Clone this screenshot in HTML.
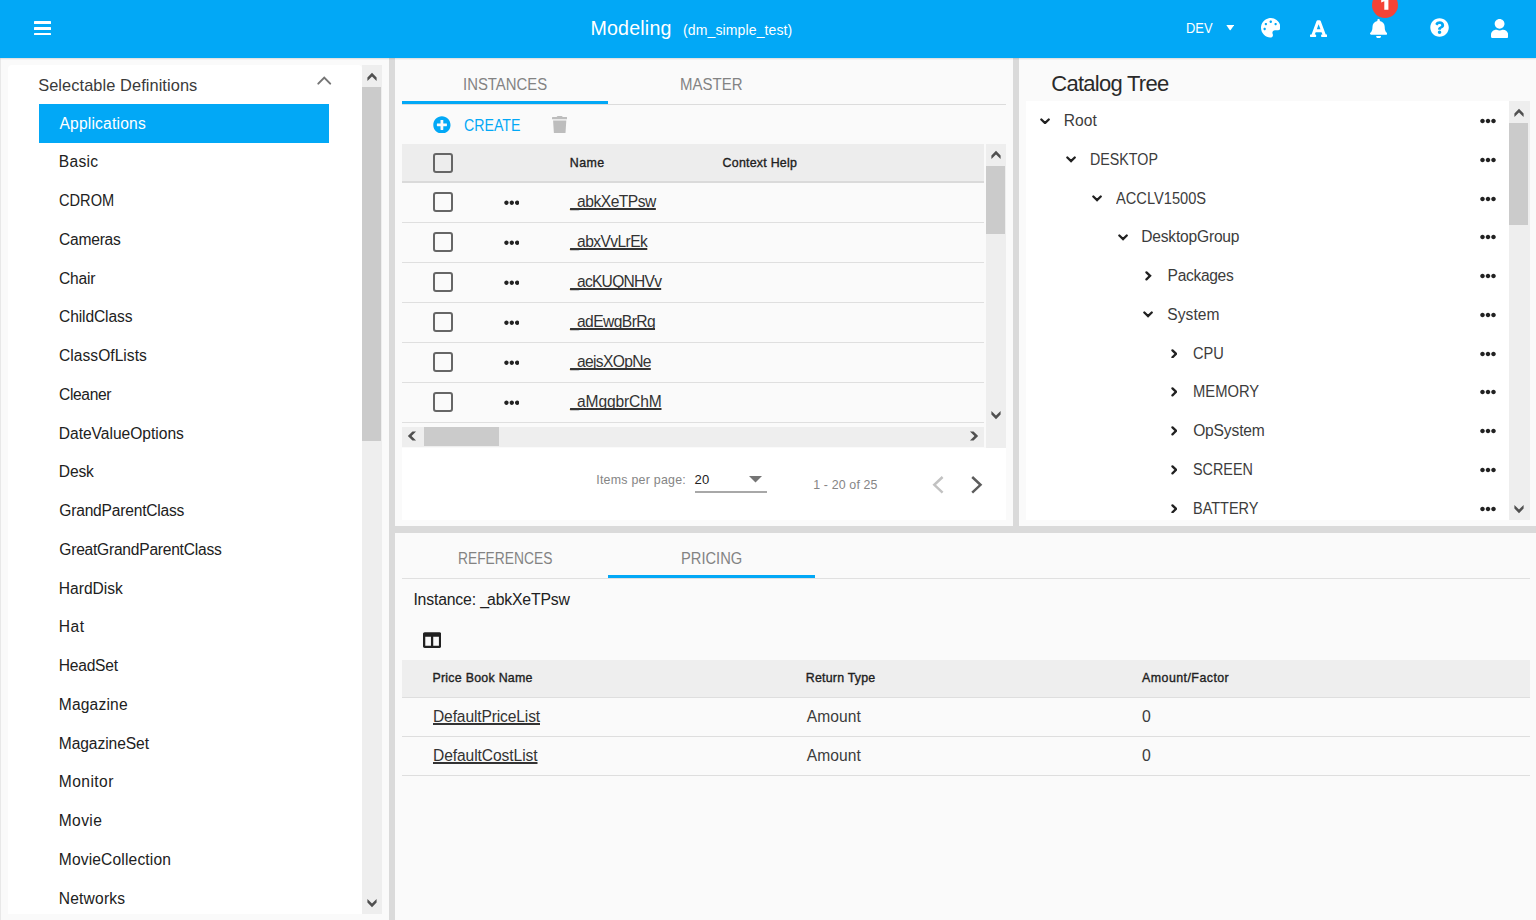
<!DOCTYPE html>
<html><head><meta charset="utf-8"><title>Modeling</title>
<style>
html,body{margin:0;padding:0}
body{width:1536px;height:920px;overflow:hidden;position:relative;background:#fafafa;font-family:"Liberation Sans",sans-serif;}
body div,body span,body a,body svg{position:absolute;white-space:nowrap;display:block}
a{text-decoration:underline;text-decoration-thickness:1.6px;text-decoration-skip-ink:none}
u{text-decoration:inherit;letter-spacing:-1.9px}
</style></head><body>
<div style="left:0px;top:57px;width:1px;height:863px;background:#e8e8e8;"></div>
<div style="left:8px;top:65.25px;width:354px;height:848.45px;background:#fff;border-radius:4px 4px 0 0;"></div>
<div style="left:362.1px;top:65.25px;width:19.9px;height:848.45px;background:#eeeeee;"></div>
<div style="left:362.1px;top:87px;width:18.8px;height:354px;background:#cbcbcb;"></div>
<div style="left:389px;top:57px;width:6px;height:863px;background:#dadada;"></div>
<div style="left:1013px;top:57px;width:6px;height:470px;background:#dadada;"></div>
<div style="left:395px;top:526.1px;width:1141px;height:6.7px;background:#dadada;"></div>
<div style="left:0px;top:0px;width:1536px;height:57.5px;background:#02a8f6;box-shadow:0 1px 1.5px rgba(0,0,0,.13);"></div>
<div style="left:34px;top:20.7px;width:17px;height:3px;background:#fff;border-radius:.6px;"></div>
<div style="left:34px;top:26.7px;width:17px;height:3px;background:#fff;border-radius:.6px;"></div>
<div style="left:34px;top:32.6px;width:17px;height:2.8px;background:#fff;border-radius:.6px;"></div>
<span style="left:590.44px;top:19.11px;font-size:19.6px;line-height:19.6px;color:#fff;letter-spacing:0.204px;">Modeling</span>
<span style="left:683.09px;top:22.85px;font-size:14px;line-height:14px;color:#fff;letter-spacing:0.120px;">(dm_simple_test)</span>
<span style="left:1185.70px;top:21.43px;font-size:14.5px;line-height:14.5px;color:#fff;transform:scaleX(0.8920);transform-origin:0 0;">DEV</span>
<svg style="left:1225.5px;top:25px" width="8.4" height="5.6" viewBox="0 0 8.4 5.6"><path d="M0.3 0h7.8L4.7 5.1Q4.2 5.6 3.7 5.1z" fill="#fff"/></svg>
<svg style="left:1260.6px;top:18.1px;" width="19.5" height="19.6" viewBox="0 0 512 512" preserveAspectRatio="none"><path fill="#fff" d="M204.3 5C104.9 24.4 24.8 104.3 5.2 203.4c-37 187 131.700 326.4 258.8 306.7 41.2-6.4 61.4-54.6 42.5-91.7-23.1-45.4 9.9-98.4 60.9-98.4h79.7c35.8 0 64.8-29.6 64.9-65.3C511.500 97.100 368.100-26.900 204.300 5zM96 320c-17.700 0-32-14.300-32-32s14.300-32 32-32 32 14.300 32 32-14.300 32-32 32zm32-128c-17.700 0-32-14.300-32-32s14.300-32 32-32 32 14.300 32 32-14.300 32-32 32zm128-64c-17.700 0-32-14.300-32-32s14.300-32 32-32 32 14.300 32 32-14.300 32-32 32zm128 64c-17.700 0-32-14.300-32-32s14.300-32 32-32 32 14.300 32 32-14.300 32-32 32z"/></svg>
<svg style="left:1310px;top:18.55px;" width="17.25" height="19.14" viewBox="0 0 448 512" preserveAspectRatio="none"><path fill="#fff" d="M432 416h-23.410L277.880 53.690A32 32 0 0 0 247.580 32h-47.160a32 32 0 0 0-30.300 21.690L39.410 416H16a16 16 0 0 0-16 16v32a16 16 0 0 0 16 16h128a16 16 0 0 0 16-16v-32a16 16 0 0 0-16-16h-19.580l23.300-64h152.560l23.300 64H304a16 16 0 0 0-16 16v32a16 16 0 0 0 16 16h128a16 16 0 0 0 16-16v-32a16 16 0 0 0-16-16zM176.850 272L224 142.510 271.150 272z"/></svg>
<svg style="left:1370.3px;top:18.6px;" width="17.2" height="19.4" viewBox="0 0 448 512" preserveAspectRatio="none"><path fill="#fff" d="M224 512c35.32 0 63.97-28.65 63.97-64H160.03c0 35.35 28.65 64 63.97 64zm215.39-149.71c-19.32-20.76-55.47-51.99-55.47-154.29 0-77.7-54.48-139.9-127.94-155.16V32c0-17.67-14.32-32-31.98-32s-31.98 14.33-31.98 32v20.84C118.56 68.1 64.08 130.3 64.08 208c0 102.3-36.15 133.53-55.47 154.29-6 6.45-8.66 14.16-8.61 21.71.11 16.4 12.98 32 32.1 32h383.8c19.12 0 32-15.6 32.1-32 .05-7.55-2.61-15.27-8.61-21.71z"/></svg>
<div style="left:1372px;top:-8px;width:26px;height:26px;background:#f44336;border-radius:50%;"></div>
<svg style="left:1378px;top:0px" width="14" height="12" viewBox="0 0 14 12"><path d="M10.4 -3V9.8H6.3V1.3L3.2 2.4V-1.2L7 -3z" fill="#fff"/></svg>
<svg style="left:1429.95px;top:18.45px;" width="19.1" height="19.1" viewBox="0 0 512 512" preserveAspectRatio="none"><path fill="#fff" d="M504 256c0 136.997-111.043 248-248 248S8 392.997 8 256C8 119.083 119.043 8 256 8s248 111.083 248 248zM262.655 90c-54.497 0-89.255 22.957-116.549 63.758-3.536 5.286-2.353 12.415 2.715 16.258l34.699 26.31c5.205 3.947 12.621 3.008 16.665-2.122 17.864-22.658 30.113-35.797 57.303-35.797 20.429 0 45.698 13.148 45.698 32.958 0 14.976-12.363 22.667-32.534 33.976C247.128 238.528 216 254.941 216 296v4c0 6.627 5.373 12 12 12h56c6.627 0 12-5.373 12-12v-1.333c0-28.462 83.186-29.647 83.186-106.667 0-58.002-60.165-102-116.531-102zM256 338c-25.365 0-46 20.635-46 46 0 25.364 20.635 46 46 46s46-20.636 46-46c0-25.365-20.635-46-46-46z"/></svg>
<svg style="left:1491px;top:18.5px;" width="17.2" height="19.25" viewBox="0 0 448 512" preserveAspectRatio="none"><path fill="#fff" d="M224 256c70.7 0 128-57.3 128-128S294.7 0 224 0 96 57.3 96 128s57.3 128 128 128zm89.6 32h-16.7c-22.2 10.2-46.9 16-72.9 16s-50.6-5.8-72.9-16h-16.7C60.2 288 0 348.2 0 422.4V464c0 26.5 21.5 48 48 48h352c26.5 0 48-21.5 48-48v-41.6c0-74.2-60.2-134.4-134.4-134.4z"/></svg>
<span style="left:38.15px;top:77.12px;font-size:16.4px;line-height:16.4px;color:#3a3a3a;letter-spacing:0.072px;">Selectable Definitions</span>
<svg style="left:315px;top:74px" width="18" height="12" viewBox="0 0 18 12"><polyline points="3.3,9.6 9.25,3.6 15.2,9.6" fill="none" stroke="#757575" stroke-width="2" stroke-linecap="round"/></svg>
<div style="left:39px;top:104px;width:290.3px;height:38.6px;background:#02a8f6;"></div>
<span style="left:59.45px;top:115.99px;font-size:15.6px;line-height:15.6px;color:#fff;letter-spacing:0.200px;">Applications</span>
<span style="left:58.75px;top:153.74px;font-size:15.6px;line-height:15.6px;color:#212121;letter-spacing:0.299px;">Basic</span>
<span style="left:58.90px;top:193.49px;font-size:15.6px;line-height:15.6px;color:#212121;transform:scaleX(0.9367);transform-origin:0 0;">CDROM</span>
<span style="left:59.04px;top:232.24px;font-size:15.6px;line-height:15.6px;color:#212121;letter-spacing:-0.241px;">Cameras</span>
<span style="left:59.04px;top:270.99px;font-size:15.6px;line-height:15.6px;color:#212121;letter-spacing:-0.198px;">Chair</span>
<span style="left:59.04px;top:308.74px;font-size:15.6px;line-height:15.6px;color:#212121;letter-spacing:-0.122px;">ChildClass</span>
<span style="left:59.04px;top:348.49px;font-size:15.6px;line-height:15.6px;color:#212121;letter-spacing:0.026px;">ClassOfLists</span>
<span style="left:59.04px;top:387.24px;font-size:15.6px;line-height:15.6px;color:#212121;letter-spacing:-0.364px;">Cleaner</span>
<span style="left:58.75px;top:425.99px;font-size:15.6px;line-height:15.6px;color:#212121;letter-spacing:-0.021px;">DateValueOptions</span>
<span style="left:58.75px;top:463.74px;font-size:15.6px;line-height:15.6px;color:#212121;letter-spacing:-0.135px;">Desk</span>
<span style="left:59.30px;top:503.49px;font-size:15.6px;line-height:15.6px;color:#212121;letter-spacing:-0.211px;">GrandParentClass</span>
<span style="left:59.30px;top:542.24px;font-size:15.6px;line-height:15.6px;color:#212121;letter-spacing:-0.242px;">GreatGrandParentClass</span>
<span style="left:58.75px;top:580.99px;font-size:15.6px;line-height:15.6px;color:#212121;letter-spacing:0.007px;">HardDisk</span>
<span style="left:58.75px;top:618.74px;font-size:15.6px;line-height:15.6px;color:#212121;letter-spacing:0.508px;">Hat</span>
<span style="left:58.75px;top:658.49px;font-size:15.6px;line-height:15.6px;color:#212121;letter-spacing:-0.233px;">HeadSet</span>
<span style="left:58.75px;top:697.24px;font-size:15.6px;line-height:15.6px;color:#212121;letter-spacing:0.179px;">Magazine</span>
<span style="left:58.75px;top:735.99px;font-size:15.6px;line-height:15.6px;color:#212121;letter-spacing:-0.080px;">MagazineSet</span>
<span style="left:58.75px;top:773.74px;font-size:15.6px;line-height:15.6px;color:#212121;letter-spacing:0.435px;">Monitor</span>
<span style="left:58.75px;top:813.49px;font-size:15.6px;line-height:15.6px;color:#212121;letter-spacing:0.368px;">Movie</span>
<span style="left:58.75px;top:852.24px;font-size:15.6px;line-height:15.6px;color:#212121;letter-spacing:0.151px;">MovieCollection</span>
<span style="left:58.75px;top:890.99px;font-size:15.6px;line-height:15.6px;color:#212121;letter-spacing:0.193px;">Networks</span>
<svg style="left:363.50px;top:68.90px" width="16" height="16" viewBox="0 0 16 16"><polygon points="8.00,3.85 12.60,8.45 12.60,12.05 8.00,7.55 3.40,12.05 3.40,8.45" fill="#505050"/></svg>
<svg style="left:363.50px;top:895.30px" width="16" height="16" viewBox="0 0 16 16"><polygon points="8.00,12.15 12.60,7.55 12.60,3.95 8.00,8.45 3.40,3.95 3.40,7.55" fill="#505050"/></svg>
<div style="left:402px;top:103.8px;width:604px;height:1px;background:#dcdcdc;"></div>
<div style="left:402px;top:101px;width:206.2px;height:3px;background:#02a8f6;"></div>
<span style="left:463.35px;top:77.29px;font-size:15.6px;line-height:15.6px;color:#838383;transform:scaleX(0.9553);transform-origin:0 0;">INSTANCES</span>
<span style="left:680.40px;top:77.29px;font-size:15.6px;line-height:15.6px;color:#838383;transform:scaleX(0.9612);transform-origin:0 0;">MASTER</span>
<svg style="left:432.8px;top:115.6px;" width="17.8" height="17.8" viewBox="0 0 512 512" preserveAspectRatio="none"><path fill="#02a8f6" d="M256 8C119 8 8 119 8 256s111 248 248 248 248-111 248-248S393 8 256 8zm144 276c0 6.600-5.400 12-12 12h-92v92c0 6.600-5.400 12-12 12h-56c-6.600 0-12-5.400-12-12v-92h-92c-6.600 0-12-5.400-12-12v-56c0-6.600 5.400-12 12-12h92v-92c0-6.600 5.400-12 12-12h56c6.600 0 12 5.400 12 12v92h92c6.600 0 12 5.400 12 12v56z"/></svg>
<span style="left:463.55px;top:118.39px;font-size:15.6px;line-height:15.6px;color:#02a8f6;transform:scaleX(0.9078);transform-origin:0 0;">CREATE</span>
<svg style="left:551.7px;top:115.6px;" width="15.4" height="17.9" viewBox="0 0 448 512" preserveAspectRatio="none"><path fill="#bdbdbd" d="M432 32H312l-9.400-18.700A24 24 0 0 0 281.100 0H166.800a23.720 23.720 0 0 0-21.400 13.300L136 32H16A16 16 0 0 0 0 48v32a16 16 0 0 0 16 16h416a16 16 0 0 0 16-16V48a16 16 0 0 0-16-16zM53.200 467a48 48 0 0 0 47.900 45h245.800a48 48 0 0 0 47.900-45L416 128H32z"/></svg>
<div style="left:402px;top:143.9px;width:582.3px;height:38px;background:#ededed;"></div>
<div style="left:402px;top:181.1px;width:582.3px;height:1.6px;background:#dadada;"></div>
<div style="left:432.9px;top:153.0px;width:16.4px;height:16.4px;background:transparent;border:2px solid #666;border-radius:3px;"></div>
<span style="left:569.80px;top:157.20px;font-size:12.4px;line-height:12.4px;color:#212121;letter-spacing:0.436px;-webkit-text-stroke:0.35px #212121;">Name</span>
<span style="left:722.61px;top:157.20px;font-size:12.4px;line-height:12.4px;color:#212121;letter-spacing:0.236px;-webkit-text-stroke:0.35px #212121;">Context Help</span>
<div style="left:432.9px;top:191.9px;width:16.4px;height:16.4px;background:transparent;border:2px solid #666;border-radius:3px;"></div>
<svg style="left:503.9px;top:195.1px;" width="15.6" height="15.6" viewBox="0 0 512 512" preserveAspectRatio="none"><path fill="#212121" d="M328 256c0 39.800-32.200 72-72 72s-72-32.200-72-72 32.200-72 72-72 72 32.200 72 72zm104-72c-39.800 0-72 32.200-72 72s32.200 72 72 72 72-32.200 72-72-32.200-72-72-72zm-352 0c-39.800 0-72 32.200-72 72s32.200 72 72 72 72-32.200 72-72-32.200-72-72-72z"/></svg>
<a style="left:570.26px;top:194.49px;font-size:15.6px;line-height:15.6px;color:#333;letter-spacing:-0.487px;"><u>_</u>abkXeTPsw</a>
<div style="left:402px;top:221.5px;width:582.3px;height:1.5px;background:#dfdfdf;"></div>
<div style="left:432.9px;top:231.9px;width:16.4px;height:16.4px;background:transparent;border:2px solid #666;border-radius:3px;"></div>
<svg style="left:503.9px;top:235.1px;" width="15.6" height="15.6" viewBox="0 0 512 512" preserveAspectRatio="none"><path fill="#212121" d="M328 256c0 39.800-32.200 72-72 72s-72-32.200-72-72 32.200-72 72-72 72 32.200 72 72zm104-72c-39.800 0-72 32.200-72 72s32.200 72 72 72 72-32.200 72-72-32.200-72-72-72zm-352 0c-39.800 0-72 32.200-72 72s32.200 72 72 72 72-32.200 72-72-32.200-72-72-72z"/></svg>
<a style="left:570.26px;top:234.49px;font-size:15.6px;line-height:15.6px;color:#333;letter-spacing:-0.576px;"><u>_</u>abxVvLrEk</a>
<div style="left:402px;top:261.5px;width:582.3px;height:1.5px;background:#dfdfdf;"></div>
<div style="left:432.9px;top:271.90000000000003px;width:16.4px;height:16.4px;background:transparent;border:2px solid #666;border-radius:3px;"></div>
<svg style="left:503.9px;top:275.09999999999997px;" width="15.6" height="15.6" viewBox="0 0 512 512" preserveAspectRatio="none"><path fill="#212121" d="M328 256c0 39.800-32.200 72-72 72s-72-32.200-72-72 32.200-72 72-72 72 32.200 72 72zm104-72c-39.800 0-72 32.200-72 72s32.200 72 72 72 72-32.200 72-72-32.200-72-72-72zm-352 0c-39.800 0-72 32.200-72 72s32.200 72 72 72 72-32.200 72-72-32.200-72-72-72z"/></svg>
<a style="left:570.26px;top:274.49px;font-size:15.6px;line-height:15.6px;color:#333;letter-spacing:-0.759px;"><u>_</u>acKUQNHVv</a>
<div style="left:402px;top:301.5px;width:582.3px;height:1.5px;background:#dfdfdf;"></div>
<div style="left:432.9px;top:311.90000000000003px;width:16.4px;height:16.4px;background:transparent;border:2px solid #666;border-radius:3px;"></div>
<svg style="left:503.9px;top:315.09999999999997px;" width="15.6" height="15.6" viewBox="0 0 512 512" preserveAspectRatio="none"><path fill="#212121" d="M328 256c0 39.800-32.200 72-72 72s-72-32.200-72-72 32.200-72 72-72 72 32.200 72 72zm104-72c-39.800 0-72 32.200-72 72s32.200 72 72 72 72-32.200 72-72-32.200-72-72-72zm-352 0c-39.800 0-72 32.200-72 72s32.200 72 72 72 72-32.200 72-72-32.200-72-72-72z"/></svg>
<a style="left:570.26px;top:314.49px;font-size:15.6px;line-height:15.6px;color:#333;letter-spacing:-0.580px;"><u>_</u>adEwgBrRg</a>
<div style="left:402px;top:341.5px;width:582.3px;height:1.5px;background:#dfdfdf;"></div>
<div style="left:432.9px;top:351.90000000000003px;width:16.4px;height:16.4px;background:transparent;border:2px solid #666;border-radius:3px;"></div>
<svg style="left:503.9px;top:355.09999999999997px;" width="15.6" height="15.6" viewBox="0 0 512 512" preserveAspectRatio="none"><path fill="#212121" d="M328 256c0 39.800-32.200 72-72 72s-72-32.200-72-72 32.200-72 72-72 72 32.200 72 72zm104-72c-39.800 0-72 32.200-72 72s32.200 72 72 72 72-32.200 72-72-32.200-72-72-72zm-352 0c-39.800 0-72 32.200-72 72s32.200 72 72 72 72-32.200 72-72-32.200-72-72-72z"/></svg>
<a style="left:570.26px;top:354.49px;font-size:15.6px;line-height:15.6px;color:#333;letter-spacing:-0.671px;"><u>_</u>aejsXOpNe</a>
<div style="left:402px;top:381.5px;width:582.3px;height:1.5px;background:#dfdfdf;"></div>
<div style="left:432.9px;top:391.90000000000003px;width:16.4px;height:16.4px;background:transparent;border:2px solid #666;border-radius:3px;"></div>
<svg style="left:503.9px;top:395.09999999999997px;" width="15.6" height="15.6" viewBox="0 0 512 512" preserveAspectRatio="none"><path fill="#212121" d="M328 256c0 39.800-32.200 72-72 72s-72-32.200-72-72 32.200-72 72-72 72 32.200 72 72zm104-72c-39.800 0-72 32.200-72 72s32.200 72 72 72 72-32.200 72-72-32.200-72-72-72zm-352 0c-39.800 0-72 32.200-72 72s32.200 72 72 72 72-32.200 72-72-32.200-72-72-72z"/></svg>
<a style="left:570.26px;top:394.49px;font-size:15.6px;line-height:15.6px;color:#333;letter-spacing:-0.146px;"><u>_</u>aMggbrChM</a>
<div style="left:402px;top:421.5px;width:582.3px;height:1.5px;background:#dfdfdf;"></div>
<div style="left:986.1px;top:144px;width:19.8px;height:303.5px;background:#eeeeee;"></div>
<div style="left:986.1px;top:165.9px;width:18.9px;height:68px;background:#cbcbcb;"></div>
<svg style="left:987.50px;top:147.40px" width="16" height="16" viewBox="0 0 16 16"><polygon points="8.00,3.85 12.60,8.45 12.60,12.05 8.00,7.55 3.40,12.05 3.40,8.45" fill="#505050"/></svg>
<svg style="left:987.50px;top:407.00px" width="16" height="16" viewBox="0 0 16 16"><polygon points="8.00,12.15 12.60,7.55 12.60,3.95 8.00,8.45 3.40,3.95 3.40,7.55" fill="#505050"/></svg>
<div style="left:402px;top:426.9px;width:582.3px;height:20.6px;background:#eeeeee;"></div>
<div style="left:423.8px;top:426.9px;width:75px;height:19.3px;background:#cbcbcb;"></div>
<svg style="left:404.40px;top:428.40px" width="16" height="16" viewBox="0 0 16 16"><polygon points="3.85,8.00 8.45,12.60 12.05,12.60 7.55,8.00 12.05,3.40 8.45,3.40" fill="#505050"/></svg>
<svg style="left:966.00px;top:428.40px" width="16" height="16" viewBox="0 0 16 16"><polygon points="12.15,8.00 7.55,12.60 3.95,12.60 8.45,8.00 3.95,3.40 7.55,3.40" fill="#505050"/></svg>
<div style="left:402px;top:447.5px;width:604px;height:72.3px;background:#fff;"></div>
<span style="left:596.20px;top:474.20px;font-size:12.4px;line-height:12.4px;color:#858585;letter-spacing:0.252px;">Items per page:</span>
<span style="left:694.60px;top:472.61px;font-size:13.1px;line-height:13.1px;color:#212121;">20</span>
<div style="left:695px;top:491.1px;width:72.2px;height:1.8px;background:#a8a8a8;"></div>
<svg style="left:749px;top:476px" width="13" height="7" viewBox="0 0 13 7"><path d="M0 0h13L6.5 6.5z" fill="#757575"/></svg>
<span style="left:813.26px;top:479.20px;font-size:12.4px;line-height:12.4px;color:#858585;letter-spacing:0.142px;">1 - 20 of 25</span>
<svg style="left:930px;top:474px;" width="16" height="22" viewBox="0 0 16 22"><polyline points="12.6,3 4.3,10.8 12.6,18.6" fill="none" stroke="#c2c2c2" stroke-width="2.5"/></svg>
<svg style="left:968px;top:474px;" width="16" height="22" viewBox="0 0 16 22"><polyline points="4.2,3 12.5,10.8 4.2,18.6" fill="none" stroke="#5c5c5c" stroke-width="2.5"/></svg>
<span style="left:1051.35px;top:73.28px;font-size:22px;line-height:22px;color:#2a2a2a;letter-spacing:-0.742px;">Catalog Tree</span>
<div style="left:1026px;top:101.3px;width:483.1px;height:418.5px;background:#fff;"></div>
<div style="left:1509.1px;top:101.3px;width:20.7px;height:418.5px;background:#eeeeee;"></div>
<div style="left:1509.1px;top:123.1px;width:18.9px;height:102px;background:#cbcbcb;"></div>
<svg style="left:1510.60px;top:104.85px" width="16" height="16" viewBox="0 0 16 16"><polygon points="8.00,3.85 12.60,8.45 12.60,12.05 8.00,7.55 3.40,12.05 3.40,8.45" fill="#505050"/></svg>
<svg style="left:1510.60px;top:501.20px" width="16" height="16" viewBox="0 0 16 16"><polygon points="8.00,12.15 12.60,7.55 12.60,3.95 8.00,8.45 3.40,3.95 3.40,7.55" fill="#505050"/></svg>
<svg style="left:1040.10px;top:117.65px" width="10.1" height="6.65" viewBox="0 0 10.1 6.65"><polyline points="1.35,1.45 5.05,5.1 8.75,1.45" fill="none" stroke="#212121" stroke-width="2.3" stroke-linecap="round" stroke-linejoin="miter"/></svg>
<span style="left:1063.75px;top:112.54px;font-size:15.6px;line-height:15.6px;color:#3c3c3c;letter-spacing:0.034px;">Root</span>
<svg style="left:1480.15px;top:113.0px;" width="16" height="16" viewBox="0 0 512 512" preserveAspectRatio="none"><path fill="#212121" d="M328 256c0 39.800-32.200 72-72 72s-72-32.200-72-72 32.200-72 72-72 72 32.200 72 72zm104-72c-39.800 0-72 32.200-72 72s32.200 72 72 72 72-32.200 72-72-32.200-72-72-72zm-352 0c-39.800 0-72 32.200-72 72s32.200 72 72 72 72-32.200 72-72-32.200-72-72-72z"/></svg>
<svg style="left:1065.90px;top:156.40px" width="10.1" height="6.65" viewBox="0 0 10.1 6.65"><polyline points="1.35,1.45 5.05,5.1 8.75,1.45" fill="none" stroke="#212121" stroke-width="2.3" stroke-linecap="round" stroke-linejoin="miter"/></svg>
<span style="left:1089.95px;top:152.29px;font-size:15.6px;line-height:15.6px;color:#3c3c3c;transform:scaleX(0.9146);transform-origin:0 0;">DESKTOP</span>
<svg style="left:1480.15px;top:151.75px;" width="16" height="16" viewBox="0 0 512 512" preserveAspectRatio="none"><path fill="#212121" d="M328 256c0 39.800-32.200 72-72 72s-72-32.200-72-72 32.200-72 72-72 72 32.200 72 72zm104-72c-39.800 0-72 32.200-72 72s32.200 72 72 72 72-32.200 72-72-32.200-72-72-72zm-352 0c-39.800 0-72 32.200-72 72s32.200 72 72 72 72-32.200 72-72-32.200-72-72-72z"/></svg>
<svg style="left:1091.70px;top:195.15px" width="10.1" height="6.65" viewBox="0 0 10.1 6.65"><polyline points="1.35,1.45 5.05,5.1 8.75,1.45" fill="none" stroke="#212121" stroke-width="2.3" stroke-linecap="round" stroke-linejoin="miter"/></svg>
<span style="left:1116.29px;top:191.04px;font-size:15.6px;line-height:15.6px;color:#3c3c3c;transform:scaleX(0.9396);transform-origin:0 0;">ACCLV1500S</span>
<svg style="left:1480.15px;top:190.5px;" width="16" height="16" viewBox="0 0 512 512" preserveAspectRatio="none"><path fill="#212121" d="M328 256c0 39.800-32.200 72-72 72s-72-32.200-72-72 32.200-72 72-72 72 32.200 72 72zm104-72c-39.800 0-72 32.200-72 72s32.200 72 72 72 72-32.200 72-72-32.200-72-72-72zm-352 0c-39.800 0-72 32.200-72 72s32.200 72 72 72 72-32.200 72-72-32.200-72-72-72z"/></svg>
<svg style="left:1117.50px;top:233.90px" width="10.1" height="6.65" viewBox="0 0 10.1 6.65"><polyline points="1.35,1.45 5.05,5.1 8.75,1.45" fill="none" stroke="#212121" stroke-width="2.3" stroke-linecap="round" stroke-linejoin="miter"/></svg>
<span style="left:1141.19px;top:228.79px;font-size:15.6px;line-height:15.6px;color:#3c3c3c;letter-spacing:-0.203px;">DesktopGroup</span>
<svg style="left:1480.15px;top:229.25px;" width="16" height="16" viewBox="0 0 512 512" preserveAspectRatio="none"><path fill="#212121" d="M328 256c0 39.800-32.200 72-72 72s-72-32.200-72-72 32.200-72 72-72 72 32.200 72 72zm104-72c-39.800 0-72 32.200-72 72s32.200 72 72 72 72-32.200 72-72-32.200-72-72-72zm-352 0c-39.800 0-72 32.200-72 72s32.200 72 72 72 72-32.200 72-72-32.200-72-72-72z"/></svg>
<svg style="left:1144.90px;top:271.10px" width="6.65" height="9.7" viewBox="0 0 6.65 9.7"><polyline points="1.45,1.35 5.1,4.85 1.45,8.35" fill="none" stroke="#212121" stroke-width="2.3" stroke-linecap="round" stroke-linejoin="miter"/></svg>
<span style="left:1167.58px;top:267.54px;font-size:15.6px;line-height:15.6px;color:#3c3c3c;letter-spacing:-0.334px;">Packages</span>
<svg style="left:1480.15px;top:268.0px;" width="16" height="16" viewBox="0 0 512 512" preserveAspectRatio="none"><path fill="#212121" d="M328 256c0 39.800-32.200 72-72 72s-72-32.200-72-72 32.200-72 72-72 72 32.200 72 72zm104-72c-39.800 0-72 32.200-72 72s32.200 72 72 72 72-32.200 72-72-32.200-72-72-72zm-352 0c-39.800 0-72 32.200-72 72s32.200 72 72 72 72-32.200 72-72-32.200-72-72-72z"/></svg>
<svg style="left:1143.30px;top:311.40px" width="10.1" height="6.65" viewBox="0 0 10.1 6.65"><polyline points="1.35,1.45 5.05,5.1 8.75,1.45" fill="none" stroke="#212121" stroke-width="2.3" stroke-linecap="round" stroke-linejoin="miter"/></svg>
<span style="left:1167.21px;top:307.29px;font-size:15.6px;line-height:15.6px;color:#3c3c3c;letter-spacing:0.062px;">System</span>
<svg style="left:1480.15px;top:306.75px;" width="16" height="16" viewBox="0 0 512 512" preserveAspectRatio="none"><path fill="#212121" d="M328 256c0 39.800-32.200 72-72 72s-72-32.200-72-72 32.200-72 72-72 72 32.200 72 72zm104-72c-39.800 0-72 32.200-72 72s32.200 72 72 72 72-32.200 72-72-32.200-72-72-72zm-352 0c-39.800 0-72 32.200-72 72s32.200 72 72 72 72-32.200 72-72-32.200-72-72-72z"/></svg>
<svg style="left:1170.70px;top:348.60px" width="6.65" height="9.7" viewBox="0 0 6.65 9.7"><polyline points="1.45,1.35 5.1,4.85 1.45,8.35" fill="none" stroke="#212121" stroke-width="2.3" stroke-linecap="round" stroke-linejoin="miter"/></svg>
<span style="left:1193.40px;top:346.04px;font-size:15.6px;line-height:15.6px;color:#3c3c3c;transform:scaleX(0.9362);transform-origin:0 0;">CPU</span>
<svg style="left:1480.15px;top:345.5px;" width="16" height="16" viewBox="0 0 512 512" preserveAspectRatio="none"><path fill="#212121" d="M328 256c0 39.800-32.200 72-72 72s-72-32.200-72-72 32.200-72 72-72 72 32.200 72 72zm104-72c-39.800 0-72 32.200-72 72s32.200 72 72 72 72-32.200 72-72-32.200-72-72-72zm-352 0c-39.800 0-72 32.200-72 72s32.200 72 72 72 72-32.200 72-72-32.200-72-72-72z"/></svg>
<svg style="left:1170.70px;top:387.35px" width="6.65" height="9.7" viewBox="0 0 6.65 9.7"><polyline points="1.45,1.35 5.1,4.85 1.45,8.35" fill="none" stroke="#212121" stroke-width="2.3" stroke-linecap="round" stroke-linejoin="miter"/></svg>
<span style="left:1193.32px;top:383.79px;font-size:15.6px;line-height:15.6px;color:#3c3c3c;transform:scaleX(0.9465);transform-origin:0 0;">MEMORY</span>
<svg style="left:1480.15px;top:384.25px;" width="16" height="16" viewBox="0 0 512 512" preserveAspectRatio="none"><path fill="#212121" d="M328 256c0 39.800-32.200 72-72 72s-72-32.200-72-72 32.200-72 72-72 72 32.200 72 72zm104-72c-39.800 0-72 32.200-72 72s32.200 72 72 72 72-32.200 72-72-32.200-72-72-72zm-352 0c-39.800 0-72 32.200-72 72s32.200 72 72 72 72-32.200 72-72-32.200-72-72-72z"/></svg>
<svg style="left:1170.70px;top:426.10px" width="6.65" height="9.7" viewBox="0 0 6.65 9.7"><polyline points="1.45,1.35 5.1,4.85 1.45,8.35" fill="none" stroke="#212121" stroke-width="2.3" stroke-linecap="round" stroke-linejoin="miter"/></svg>
<span style="left:1193.15px;top:422.54px;font-size:15.6px;line-height:15.6px;color:#3c3c3c;letter-spacing:-0.161px;">OpSystem</span>
<svg style="left:1480.15px;top:423.0px;" width="16" height="16" viewBox="0 0 512 512" preserveAspectRatio="none"><path fill="#212121" d="M328 256c0 39.800-32.200 72-72 72s-72-32.200-72-72 32.200-72 72-72 72 32.200 72 72zm104-72c-39.800 0-72 32.200-72 72s32.200 72 72 72 72-32.200 72-72-32.200-72-72-72zm-352 0c-39.800 0-72 32.200-72 72s32.200 72 72 72 72-32.200 72-72-32.200-72-72-72z"/></svg>
<svg style="left:1170.70px;top:464.85px" width="6.65" height="9.7" viewBox="0 0 6.65 9.7"><polyline points="1.45,1.35 5.1,4.85 1.45,8.35" fill="none" stroke="#212121" stroke-width="2.3" stroke-linecap="round" stroke-linejoin="miter"/></svg>
<span style="left:1193.15px;top:462.29px;font-size:15.6px;line-height:15.6px;color:#3c3c3c;transform:scaleX(0.9212);transform-origin:0 0;">SCREEN</span>
<svg style="left:1480.15px;top:461.75px;" width="16" height="16" viewBox="0 0 512 512" preserveAspectRatio="none"><path fill="#212121" d="M328 256c0 39.800-32.200 72-72 72s-72-32.200-72-72 32.200-72 72-72 72 32.200 72 72zm104-72c-39.800 0-72 32.200-72 72s32.200 72 72 72 72-32.200 72-72-32.200-72-72-72zm-352 0c-39.800 0-72 32.200-72 72s32.200 72 72 72 72-32.200 72-72-32.200-72-72-72z"/></svg>
<svg style="left:1170.70px;top:503.60px" width="6.65" height="9.7" viewBox="0 0 6.65 9.7"><polyline points="1.45,1.35 5.1,4.85 1.45,8.35" fill="none" stroke="#212121" stroke-width="2.3" stroke-linecap="round" stroke-linejoin="miter"/></svg>
<span style="left:1192.70px;top:501.04px;font-size:15.6px;line-height:15.6px;color:#3c3c3c;transform:scaleX(0.9285);transform-origin:0 0;">BATTERY</span>
<svg style="left:1480.15px;top:500.5px;" width="16" height="16" viewBox="0 0 512 512" preserveAspectRatio="none"><path fill="#212121" d="M328 256c0 39.800-32.200 72-72 72s-72-32.200-72-72 32.200-72 72-72 72 32.200 72 72zm104-72c-39.800 0-72 32.200-72 72s32.200 72 72 72 72-32.200 72-72-32.200-72-72-72zm-352 0c-39.800 0-72 32.200-72 72s32.200 72 72 72 72-32.200 72-72-32.200-72-72-72z"/></svg>
<div style="left:402px;top:578px;width:1128px;height:1px;background:#e0e0e0;"></div>
<div style="left:608px;top:575.4px;width:207px;height:2.8px;background:#02a8f6;"></div>
<span style="left:457.62px;top:551.49px;font-size:15.6px;line-height:15.6px;color:#838383;transform:scaleX(0.8853);transform-origin:0 0;">REFERENCES</span>
<span style="left:681.15px;top:551.49px;font-size:15.6px;line-height:15.6px;color:#838383;transform:scaleX(0.9425);transform-origin:0 0;">PRICING</span>
<span style="left:413.39px;top:591.63px;font-size:15.8px;line-height:15.8px;color:#212121;letter-spacing:-0.173px;">Instance: <u>_</u>abkXeTPsw</span>
<svg style="left:422.5px;top:631.4px;" width="18.2" height="18" viewBox="0 0 512 512" preserveAspectRatio="none"><path fill="#212121" d="M464 32H48C21.490 32 0 53.490 0 80v352c0 26.510 21.490 48 48 48h416c26.510 0 48-21.490 48-48V80c0-26.510-21.490-48-48-48zM224 416H64V160h160v256zm224 0H288V160h160v256z"/></svg>
<div style="left:402px;top:659.5px;width:1128px;height:37.5px;background:#eeeeee;"></div>
<div style="left:402px;top:697px;width:1128px;height:1.2px;background:#dedede;"></div>
<span style="left:432.42px;top:671.90px;font-size:12.4px;line-height:12.4px;color:#212121;letter-spacing:0.263px;-webkit-text-stroke:0.35px #212121;">Price Book Name</span>
<span style="left:805.83px;top:671.90px;font-size:12.4px;line-height:12.4px;color:#212121;letter-spacing:0.212px;-webkit-text-stroke:0.35px #212121;">Return Type</span>
<span style="left:1142.08px;top:671.90px;font-size:12.4px;line-height:12.4px;color:#212121;letter-spacing:0.450px;-webkit-text-stroke:0.35px #212121;">Amount/Factor</span>
<a style="left:433.00px;top:708.79px;font-size:15.6px;line-height:15.6px;color:#333;letter-spacing:-0.138px;">DefaultPriceList</a>
<span style="left:806.66px;top:708.79px;font-size:15.6px;line-height:15.6px;color:#3c3c3c;letter-spacing:0.102px;">Amount</span>
<span style="left:1142.00px;top:708.63px;font-size:15.8px;line-height:15.8px;color:#3c3c3c;">0</span>
<div style="left:402px;top:736.0px;width:1128px;height:1px;background:#dedede;"></div>
<a style="left:433.00px;top:747.54px;font-size:15.6px;line-height:15.6px;color:#333;letter-spacing:-0.083px;">DefaultCostList</a>
<span style="left:806.66px;top:747.54px;font-size:15.6px;line-height:15.6px;color:#3c3c3c;letter-spacing:0.102px;">Amount</span>
<span style="left:1142.00px;top:748.38px;font-size:15.8px;line-height:15.8px;color:#3c3c3c;">0</span>
<div style="left:402px;top:774.75px;width:1128px;height:1px;background:#dedede;"></div>
</body></html>
